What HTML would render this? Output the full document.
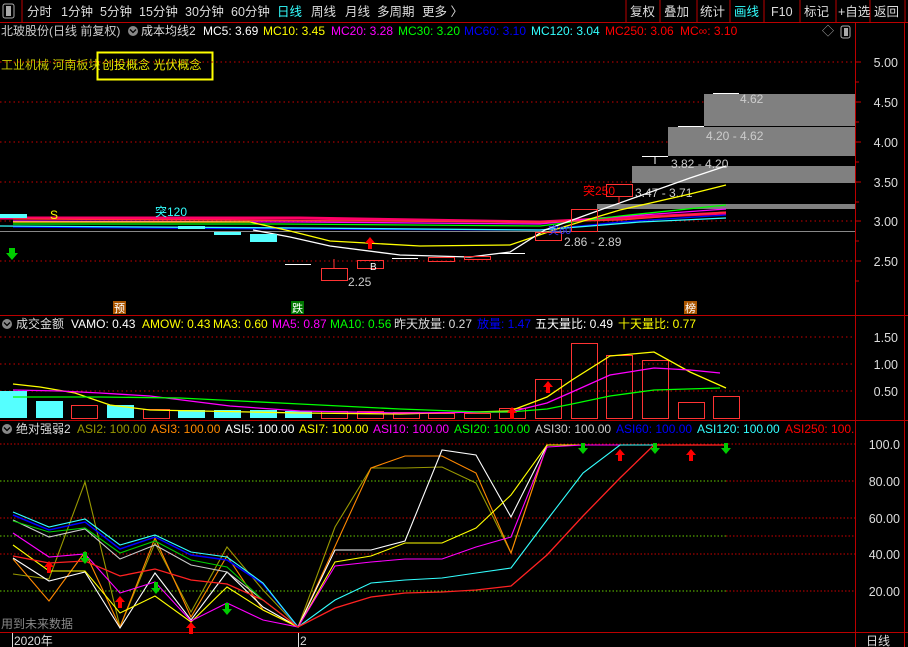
<!DOCTYPE html>
<html><head><meta charset="utf-8"><style>
html,body{margin:0;padding:0;background:#000;width:908px;height:647px;overflow:hidden}
svg{display:block;font-family:"Liberation Sans","Noto Sans CJK SC",sans-serif}
</style></head><body>
<svg width="908" height="647" viewBox="0 0 908 647" xmlns="http://www.w3.org/2000/svg">
<rect width="908" height="647" fill="#000"/>
<!-- top bar -->
<g font-size="12.5" fill="#ddd">
<rect x="3" y="4" width="11" height="14" rx="2" fill="none" stroke="#aaa"/><rect x="6" y="6" width="5" height="10" fill="#aaa"/>
<line x1="22" y1="0" x2="22" y2="22" stroke="#b00"/>
<text x="27" y="16">分时</text><text x="61" y="16">1分钟</text><text x="100" y="16">5分钟</text><text x="139" y="16">15分钟</text><text x="185" y="16">30分钟</text><text x="231" y="16">60分钟</text>
<text x="277" y="16" fill="#3ff">日线</text><text x="311" y="16">周线</text><text x="345" y="16">月线</text><text x="377" y="16">多周期</text><text x="422" y="16">更多 〉</text>
<g stroke="#b00"><line x1="626" y1="0" x2="626" y2="22"/><line x1="660" y1="0" x2="660" y2="22"/><line x1="697" y1="0" x2="697" y2="22"/><line x1="730" y1="0" x2="730" y2="22"/><line x1="764" y1="0" x2="764" y2="22"/><line x1="800" y1="0" x2="800" y2="22"/><line x1="836" y1="0" x2="836" y2="22"/><line x1="870" y1="0" x2="870" y2="22"/><line x1="905" y1="0" x2="905" y2="22"/></g>
<text x="630" y="16">复权</text><text x="664" y="16">叠加</text><text x="700" y="16">统计</text><text x="734" y="16" fill="#3ff">画线</text><text x="771" y="16">F10</text><text x="804" y="16">标记</text><text x="838" y="16">+自选</text><text x="874" y="16">返回</text>
</g>
<line x1="0" y1="22.5" x2="908" y2="22.5" stroke="#b00"/>
<!-- frame -->
<g stroke="#b00" fill="none">
<line x1="855.5" y1="22" x2="855.5" y2="647"/>
<line x1="904.5" y1="22" x2="904.5" y2="647"/>
<line x1="0" y1="315.5" x2="908" y2="315.5"/>
<line x1="0" y1="420.5" x2="908" y2="420.5"/>
<line x1="0" y1="632.5" x2="908" y2="632.5"/>
</g>
<!-- header main -->
<g font-size="12">
<text x="1" y="35" fill="#ccc">北玻股份(日线 前复权)</text>
<circle cx="133" cy="31" r="5" fill="#888"/><path d="M130 29.5l3 3 3-3" stroke="#000" fill="none" stroke-width="1.3"/>
<text x="141" y="35" fill="#ddd">成本均线2</text>
<text x="203" y="35" fill="#fff">MC5: 3.69</text>
<text x="263" y="35" fill="#ff0">MC10: 3.45</text>
<text x="331" y="35" fill="#f0f">MC20: 3.28</text>
<text x="398" y="35" fill="#0f0">MC30: 3.20</text>
<text x="464" y="35" fill="#00f">MC60: 3.10</text>
<text x="531" y="35" fill="#3ff">MC120: 3.04</text>
<text x="605" y="35" fill="#f00">MC250: 3.06</text>
<text x="680" y="35" fill="#f00">MC∞: 3.10</text>
<text x="822" y="35" fill="#aaa">◇</text>
<rect x="841" y="26" width="9" height="12" rx="2" fill="none" stroke="#aaa"/><rect x="844" y="28" width="4" height="8" fill="#aaa"/>
<text x="1" y="69" fill="#cc0">工业机械 河南板块</text>
<rect x="97.5" y="52.5" width="115" height="27" fill="none" stroke="#ff0" stroke-width="2"/>
<text x="102" y="69" fill="#ee0">创投概念 光伏概念</text>
</g>
<!-- price grid -->
<g stroke="#c00" stroke-dasharray="1.5 3">
<line x1="0" y1="62" x2="855" y2="62"/><line x1="0" y1="102" x2="855" y2="102"/><line x1="0" y1="142" x2="855" y2="142"/><line x1="0" y1="182" x2="855" y2="182"/><line x1="0" y1="221" x2="855" y2="221"/><line x1="0" y1="261" x2="855" y2="261"/>
</g>
<g font-size="12.5" fill="#ddd" text-anchor="end">
<text x="898" y="67">5.00</text><text x="898" y="107">4.50</text><text x="898" y="147">4.00</text><text x="898" y="187">3.50</text><text x="898" y="226">3.00</text><text x="898" y="266">2.50</text>
</g>
<g stroke="#c00"><line x1="855" y1="62" x2="861" y2="62"/><line x1="855" y1="102" x2="861" y2="102"/><line x1="855" y1="142" x2="861" y2="142"/><line x1="855" y1="182" x2="861" y2="182"/><line x1="855" y1="221" x2="861" y2="221"/><line x1="855" y1="261" x2="861" y2="261"/>
<line x1="855" y1="82" x2="859" y2="82"/><line x1="855" y1="122" x2="859" y2="122"/><line x1="855" y1="162" x2="859" y2="162"/><line x1="855" y1="202" x2="859" y2="202"/><line x1="855" y1="241" x2="859" y2="241"/><line x1="855" y1="281" x2="859" y2="281"/></g>
<!-- gray zones -->
<g fill="#808080">
<rect x="704" y="94" width="151" height="32"/>
<rect x="668" y="127" width="187" height="29"/>
<rect x="632" y="166" width="223" height="17"/>
<rect x="597" y="204" width="258" height="5"/>
</g>
<line x1="0" y1="231.5" x2="855" y2="231.5" stroke="#888"/>
<g font-size="12" fill="#ccc">
<text x="740" y="103">4.62</text>
<text x="706" y="140">4.20 - 4.62</text>
<text x="671" y="168">3.82 - 4.20</text>
<text x="635" y="197">3.47 - 3.71</text>
<text x="564" y="246">2.86 - 2.89</text>
<text x="348" y="286">2.25</text>
</g>
<!-- MA bundle -->
<g fill="none">
<polyline points="0,218 300,218 540,222 600,219 726,213" stroke="#f06" stroke-width="3"/>
<polyline points="13,221 300,222 540,224 600,218 726,209" stroke="#f0f" stroke-width="1.3"/>
<polyline points="13,224 280,224 540,226 620,216 726,205" stroke="#0f0" stroke-width="1.3"/>
<polyline points="13,227 300,229 540,230 620,222 726,215" stroke="#00f" stroke-width="1.3"/>
<polyline points="0,226 300,228 540,230 640,222 726,218" stroke="#3ff" stroke-width="1.3"/>
<polyline points="13,219 200,220 540,222 620,220 726,212" stroke="#f33" stroke-width="1.3"/>
<polyline points="13,222 250,222 290,231 330,241 420,246 510,245 560,228 620,210 690,194 726,185" stroke="#ff0" stroke-width="1.3"/>
<polyline points="253,230 290,237 330,246 400,255 470,257 510,252 545,230 600,210 690,178 726,166" stroke="#fff" stroke-width="1.3"/>
</g>
<!-- candles -->
<g>
<rect x="0" y="214" width="27" height="4" fill="#5ff"/>
<rect x="214" y="232" width="27" height="3" fill="#5ff"/>
<rect x="250" y="234" width="27" height="8" fill="#5ff"/>
<rect x="178" y="226" width="27" height="3" fill="#5ff"/>
<line x1="285" y1="264.5" x2="311" y2="264.5" stroke="#fff"/>
<rect x="321.5" y="268.5" width="26" height="12" fill="none" stroke="#f33"/><line x1="334" y1="259" x2="334" y2="268" stroke="#f33"/>
<rect x="357.5" y="260.5" width="26" height="8" fill="none" stroke="#f33"/>
<text x="370" y="270" fill="#fff" font-size="10">B</text>
<line x1="392" y1="258.5" x2="418" y2="258.5" stroke="#fff"/>
<rect x="428.5" y="257.5" width="26" height="4" fill="none" stroke="#f33"/>
<rect x="464.5" y="256.5" width="26" height="3" fill="none" stroke="#f33"/>
<line x1="499" y1="253.5" x2="525" y2="253.5" stroke="#fff"/>
<rect x="535.5" y="232.5" width="26" height="8" fill="none" stroke="#f33"/>
<rect x="571.5" y="209.5" width="26" height="22" fill="none" stroke="#f33"/>
<rect x="606.5" y="184.5" width="26" height="12" fill="none" stroke="#f33"/><line x1="619" y1="197" x2="619" y2="203" stroke="#f33"/>
<line x1="642" y1="156.5" x2="668" y2="156.5" stroke="#fff"/><line x1="655" y1="156" x2="655" y2="164" stroke="#fff"/>
<line x1="678" y1="126.5" x2="704" y2="126.5" stroke="#fff"/>
<line x1="713" y1="93.5" x2="739" y2="93.5" stroke="#fff"/>
</g>
<text x="50" y="219" fill="#ff0" font-size="12">S</text>
<text x="155" y="216" fill="#3ff" font-size="12">突120</text>
<text x="583" y="195" fill="#f00" font-size="12">突250</text>
<text x="548" y="234" fill="#33f" font-size="11">突60</text>
<path d="M9 248h6v5h3l-6 7-6-7h3z" fill="#0c0"/>
<path d="M370 237l5 6h-3v6h-4v-6h-3z" fill="#f00"/>
<g font-size="11"><rect x="113" y="301" width="13" height="13" fill="#a50"/><text x="114" y="312" fill="#fff">预</text>
<rect x="291" y="301" width="13" height="13" fill="#070"/><text x="292" y="312" fill="#fff">跌</text>
<rect x="684" y="301" width="13" height="13" fill="#a50"/><text x="685" y="312" fill="#fff">榜</text></g>
<!-- volume panel -->
<g font-size="12">
<circle cx="7" cy="324" r="5" fill="#888"/><path d="M4 322.5l3 3 3-3" stroke="#000" fill="none" stroke-width="1.3"/>
<text x="16" y="328" fill="#ddd">成交金额</text>
<text x="71" y="328" fill="#fff">VAMO: 0.43</text>
<text x="142" y="328" fill="#ff0">AMOW: 0.43</text>
<text x="213" y="328" fill="#ff0">MA3: 0.60</text>
<text x="272" y="328" fill="#f0f">MA5: 0.87</text>
<text x="330" y="328" fill="#0f0">MA10: 0.56</text>
<text x="394" y="328" fill="#ddd">昨天放量: 0.27</text>
<text x="477" y="328" fill="#00f">放量: 1.47</text>
<text x="535" y="328" fill="#fff">五天量比: 0.49</text>
<text x="618" y="328" fill="#ff0">十天量比: 0.77</text>
</g>
<g stroke="#c00" stroke-dasharray="1.5 3"><line x1="0" y1="337" x2="855" y2="337"/><line x1="0" y1="364" x2="855" y2="364"/><line x1="0" y1="391" x2="855" y2="391"/></g>
<g font-size="12.5" fill="#ddd" text-anchor="end"><text x="898" y="342">1.50</text><text x="898" y="369">1.00</text><text x="898" y="396">0.50</text></g>
<g fill="#5ff">
<rect x="0" y="391" width="27" height="27"/><rect x="36" y="401" width="27" height="17"/><rect x="107" y="405" width="27" height="13"/><rect x="178" y="410" width="27" height="8"/><rect x="214" y="410" width="27" height="8"/><rect x="250" y="410" width="27" height="8"/><rect x="285" y="411" width="27" height="7"/>
</g>
<g fill="none" stroke="#f33">
<rect x="71.5" y="405.5" width="26" height="13"/><rect x="143.5" y="409.5" width="26" height="9"/><rect x="321.5" y="411.5" width="26" height="7"/><rect x="357.5" y="411.5" width="26" height="7"/><rect x="393.5" y="412.5" width="26" height="6"/><rect x="428.5" y="413.5" width="26" height="5"/><rect x="464.5" y="413.5" width="26" height="5"/><rect x="499.5" y="408.5" width="26" height="10"/><rect x="535.5" y="379.5" width="26" height="39"/><rect x="571.5" y="343.5" width="26" height="75"/><rect x="606.5" y="355.5" width="26" height="63"/><rect x="642.5" y="360.5" width="26" height="58"/><rect x="678.5" y="402.5" width="26" height="16"/><rect x="713.5" y="396.5" width="26" height="22"/>
</g>
<g fill="none" stroke-width="1.3">
<polyline points="13,384 40,387 75,393 110,405 150,410 250,412 300,413 400,414 510,411 547,397 572,380 610,356 654,352 690,372 726,388" stroke="#ff0"/>
<polyline points="13,390 60,391 100,393 150,396 230,406 300,411 400,413 510,412 547,403 572,392 610,375 654,368 690,370 720,373" stroke="#f0f"/>
<polyline points="13,397 100,397 180,398 300,404 400,409 480,412 510,412 547,409 572,404 610,396 654,390 720,388" stroke="#0f0"/>
</g>
<path d="M512 407l5 6h-3v6h-4v-6h-3z" fill="#f00"/>
<path d="M548 381l5 6h-3v6h-4v-6h-3z" fill="#f00"/>
<!-- ASI panel -->
<g font-size="12">
<circle cx="7" cy="429" r="5" fill="#888"/><path d="M4 427.5l3 3 3-3" stroke="#000" fill="none" stroke-width="1.3"/>
<text x="16" y="433" fill="#ddd">绝对强弱2</text>
<text x="77" y="433" fill="#990">ASI2: 100.00</text>
<text x="151" y="433" fill="#f80">ASI3: 100.00</text>
<text x="225" y="433" fill="#fff">ASI5: 100.00</text>
<text x="299" y="433" fill="#ff0">ASI7: 100.00</text>
<text x="373" y="433" fill="#f0f">ASI10: 100.00</text>
<text x="454" y="433" fill="#0f0">ASI20: 100.00</text>
<text x="535" y="433" fill="#ccc">ASI30: 100.00</text>
<text x="616" y="433" fill="#00f">ASI60: 100.00</text>
<text x="697" y="433" fill="#3ff">ASI120: 100.00</text>
<text x="785" y="433" fill="#f00">ASI250: 100.</text>
</g>
<g stroke-dasharray="1.5 2">
<line x1="0" y1="444" x2="855" y2="444" stroke="#c00"/>
<line x1="0" y1="481" x2="726" y2="481" stroke="#6c0"/><line x1="726" y1="481" x2="855" y2="481" stroke="#c00"/>
<line x1="0" y1="518" x2="855" y2="518" stroke="#c00"/>
<line x1="0" y1="536" x2="726" y2="536" stroke="#6c0"/><line x1="726" y1="536" x2="855" y2="536" stroke="#c00"/>
<line x1="0" y1="554" x2="855" y2="554" stroke="#c00"/>
<line x1="0" y1="591" x2="726" y2="591" stroke="#6c0"/><line x1="726" y1="591" x2="855" y2="591" stroke="#c00"/>
</g>
<g font-size="12.5" fill="#ddd" text-anchor="end"><text x="900" y="449">100.0</text><text x="900" y="486">80.00</text><text x="900" y="523">60.00</text><text x="900" y="559">40.00</text><text x="900" y="596">20.00</text></g>
<g fill="none" stroke-width="1.1">
<polyline points="13,574 49,579 85,482 120,627 155,543 191,612 227,547 263,590 298,627 335,527 371,468 405,468 442,467 476,483 511,553 547,445 726,445" stroke="#990"/>
<polyline points="13,559 49,601 85,552 120,627 155,538 191,617 227,556 263,610 298,627 371,468 405,456 442,456 476,473 511,553 547,445 726,445" stroke="#f80"/>
<polyline points="13,558 49,581 85,572 120,628 155,573 191,620 227,572 263,607 298,627 335,550 371,550 405,541 442,450 476,455 511,517 547,445 726,445" stroke="#fff"/>
<polyline points="13,545 49,571 85,571 120,613 155,596 191,622 227,587 263,610 298,627 335,562 371,556 405,543 442,543 476,528 511,495 547,445 726,445" stroke="#ff0"/>
<polyline points="13,533 49,557 85,554 120,593 155,582 191,621 227,603 263,620 298,627 335,566 371,562 405,559 442,559 476,547 511,537 547,447 583,445 726,445" stroke="#f0f"/>
<polyline points="13,520 49,537 85,529 120,559 155,545 191,565 227,572 263,600 298,627" stroke="#ccc"/>
<polyline points="13,521 49,532 85,528 120,553 155,541 191,560 227,567 263,600 298,627" stroke="#0c0"/>
<polyline points="13,515 49,530 85,522 120,549 155,537 191,555 227,560 263,584 298,627" stroke="#00f" stroke-width="1.5"/>
<polyline points="13,512 49,527 85,519 120,545 155,535 191,552 227,557 263,583 298,627 335,600 371,583 405,580 442,578 476,573 511,568 547,520 583,473 620,445 726,445" stroke="#3ff"/>
<polyline points="13,556 49,563 85,561 120,576 155,569 191,580 227,584 263,600 298,627 335,608 371,597 405,593 442,592 476,590 511,586 547,555 583,516 620,478 654,445 726,445" stroke="#f22" stroke-width="1.3"/>
</g>
<g fill="#f00"><path d="M49 561l5 6h-3v6h-4v-6h-3z"/><path d="M120 596l5 6h-3v6h-4v-6h-3z"/><path d="M191 622l5 6h-3v6h-4v-6h-3z"/><path d="M620 449l5 6h-3v6h-4v-6h-3z"/><path d="M691 449l5 6h-3v6h-4v-6h-3z"/></g>
<g fill="#0c0"><path d="M83 552h4v6h3l-5 6-5-6h3z"/><path d="M154 582h4v6h3l-5 6-5-6h3z"/><path d="M225 603h4v6h3l-5 6-5-6h3z"/><path d="M581 443h4v5h3l-5 6-5-6h3z"/><path d="M653 443h4v5h3l-5 6-5-6h3z"/><path d="M724 443h4v5h3l-5 6-5-6h3z"/></g>
<text x="1" y="628" fill="#888" font-size="12">用到未来数据</text>
<!-- bottom -->
<g font-size="12" fill="#ddd">
<line x1="12.5" y1="633" x2="12.5" y2="647" stroke="#ddd"/>
<text x="14" y="645">2020年</text>
<line x1="298.5" y1="633" x2="298.5" y2="647" stroke="#ddd"/>
<text x="300" y="645">2</text>
<text x="866" y="645">日线</text>
</g>
</svg>
</body></html>
